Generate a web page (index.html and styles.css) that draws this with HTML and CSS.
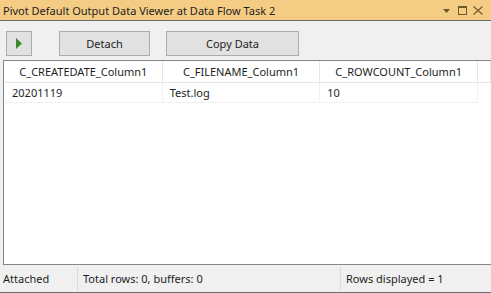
FILE: index.html
```html
<!DOCTYPE html>
<html>
<head>
    <title>Data Viewer</title>
<link rel="stylesheet" href="styles.css">
</head>
<body>
    <div class="window">
        <div class="titlebar">
            <span class="title">Pivot Default Output Data Viewer at Data Flow Task 2</span>
            <div class="title-icons">
                <svg class="icon-menu" width="7" height="4" viewBox="0 0 7 4"><polygon points="0,0 7,0 3.5,4" fill="#6b5a2a"/></svg>
                <svg class="icon-max" width="9" height="9" viewBox="0 0 9 9"><rect x="0.5" y="0.5" width="8" height="8" fill="none" stroke="#6b5a2a"/><rect x="0" y="0" width="9" height="2" fill="#6b5a2a"/></svg>
                <svg class="icon-close" width="10" height="9" viewBox="0 0 10 9"><path d="M0.5 0.5 L9.5 8.5 M9.5 0.5 L0.5 8.5" stroke="#6b5a2a" stroke-width="1.1" fill="none"/></svg>
            </div>
        </div>

        <div class="toolbar">
            <button class="btn btn-play">
                <svg width="6" height="11" viewBox="0 0 6 11"><polygon points="0,0 6,5.5 0,11" fill="#3a8a2c"/></svg>
            </button>
            <button class="btn btn-detach">Detach</button>
            <button class="btn btn-copy">Copy Data</button>
        </div>

        <div class="grid">
            <table>
                <thead>
                    <tr>
                        <th>C_CREATEDATE_Column1</th>
                        <th>C_FILENAME_Column1</th>
                        <th>C_ROWCOUNT_Column1</th>
                        <th class="filler"></th>
                    </tr>
                </thead>
                <tbody>
                    <tr>
                        <td>20201119</td>
                        <td>Test.log</td>
                        <td>10</td>
                        <td class="filler"></td>
                    </tr>
                </tbody>
            </table>
        </div>

        <div class="statusbar">
            <div class="status status-state">Attached</div>
            <div class="status status-total">Total rows: 0, buffers: 0</div>
            <div class="status status-shown">Rows displayed = 1</div>
        </div>
    </div>
</body>
</html>
```

FILE: styles.css
```css
body {
    margin: 0;
    padding: 0;
    font-family: "Noto Sans", "Open Sans", sans-serif;
    font-size: 11px;
    color: #1e1e1e;
    background-color: #f0f0f0;
}

.window {
    width: 491px;
    height: 293px;
    display: flex;
    flex-direction: column;
    overflow: hidden;
}

.titlebar {
    height: 20px;
    background-color: #f5cc84;
    border-bottom: 1px solid #6b6b6b;
    display: flex;
    align-items: center;
    justify-content: space-between;
    padding: 0 8px 0 3px;
}

.title {
    font-size: 11px;
    color: #1e1e1e;
}

.title-icons {
    display: flex;
    align-items: center;
}

.title-icons svg {
    display: block;
}

.icon-menu {
    margin-top: 1px;
}

.icon-max {
    margin-left: 8px;
}

.icon-close {
    margin-left: 6px;
}

.toolbar {
    height: 25px;
    padding: 10px 0 0 6px;
    display: flex;
}

.btn {
    height: 25px;
    background-color: #e1e1e1;
    border: 1px solid #adadad;
    font-family: inherit;
    font-size: 11px;
    color: #1e1e1e;
    padding: 0;
    margin: 0;
    display: flex;
    align-items: center;
    justify-content: center;
}

.btn-play {
    width: 26px;
}

.btn-detach {
    width: 91px;
    margin-left: 27px;
}

.btn-copy {
    width: 133px;
    margin-left: 16px;
}

.grid {
    margin: 4px 0 0 3px;
    flex: 1;
    background-color: #fff;
    border: 1px solid #828790;
    border-right: none;
    padding-left: 1px;
}

table {
    border-collapse: collapse;
    table-layout: fixed;
}

th, td {
    font-weight: normal;
    white-space: nowrap;
    padding: 0;
}

th {
    width: 157px;
    height: 21px;
    text-align: center;
    border-right: 1px solid #e5e5e5;
    border-bottom: 1px solid #e5e5e5;
}

th.filler {
    width: 12px;
}

td {
    height: 19px;
    padding-left: 7px;
    text-align: left;
    border-right: 1px solid #f0f0f0;
    border-bottom: 1px solid #f0f0f0;
}

td.filler {
    border: none;
}

.statusbar {
    height: 27px;
    display: flex;
    align-items: center;
    border-bottom: 1px solid #6b6b6b;
}

.status {
    height: 24px;
    display: flex;
    align-items: center;
    padding-left: 3px;
    border-right: 1px solid #dcdcdc;
}

.status-state {
    width: 74px;
}

.status-total {
    width: 257px;
    padding-left: 5px;
}

.status-shown {
    border-right: none;
    padding-left: 5px;
}
```
